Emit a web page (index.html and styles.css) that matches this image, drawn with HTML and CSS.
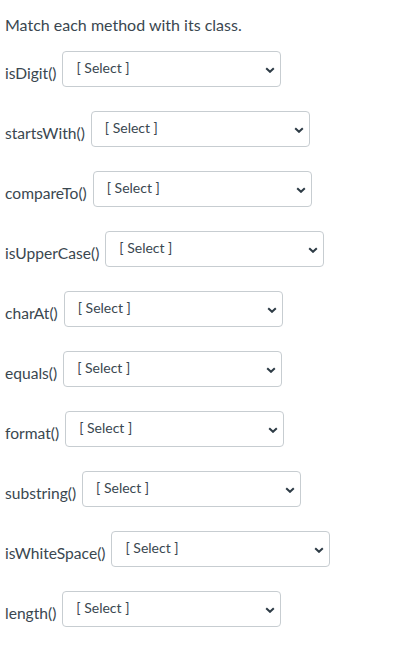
FILE: index.html
```html
<!DOCTYPE html>
<html>
<head>
<meta charset="utf-8">
<link rel="stylesheet" href="styles.css">
</head>
<body>
<div class="page">
  <p class="prompt">Match each method with its class.</p>
  <div class="rows">
    <div class="row"><span class="label">isDigit()</span><div class="select"><span class="value">[ Select ]</span><svg class="chev" viewBox="0 0 10 6"><path d="M1.2 1.2l3.8 3.6 3.8-3.6"/></svg></div></div>
    <div class="row"><span class="label">startsWith()</span><div class="select"><span class="value">[ Select ]</span><svg class="chev" viewBox="0 0 10 6"><path d="M1.2 1.2l3.8 3.6 3.8-3.6"/></svg></div></div>
    <div class="row"><span class="label">compareTo()</span><div class="select"><span class="value">[ Select ]</span><svg class="chev" viewBox="0 0 10 6"><path d="M1.2 1.2l3.8 3.6 3.8-3.6"/></svg></div></div>
    <div class="row"><span class="label">isUpperCase()</span><div class="select"><span class="value">[ Select ]</span><svg class="chev" viewBox="0 0 10 6"><path d="M1.2 1.2l3.8 3.6 3.8-3.6"/></svg></div></div>
    <div class="row"><span class="label">charAt()</span><div class="select"><span class="value">[ Select ]</span><svg class="chev" viewBox="0 0 10 6"><path d="M1.2 1.2l3.8 3.6 3.8-3.6"/></svg></div></div>
    <div class="row"><span class="label">equals()</span><div class="select"><span class="value">[ Select ]</span><svg class="chev" viewBox="0 0 10 6"><path d="M1.2 1.2l3.8 3.6 3.8-3.6"/></svg></div></div>
    <div class="row"><span class="label">format()</span><div class="select"><span class="value">[ Select ]</span><svg class="chev" viewBox="0 0 10 6"><path d="M1.2 1.2l3.8 3.6 3.8-3.6"/></svg></div></div>
    <div class="row"><span class="label">substring()</span><div class="select"><span class="value">[ Select ]</span><svg class="chev" viewBox="0 0 10 6"><path d="M1.2 1.2l3.8 3.6 3.8-3.6"/></svg></div></div>
    <div class="row"><span class="label">isWhiteSpace()</span><div class="select"><span class="value">[ Select ]</span><svg class="chev" viewBox="0 0 10 6"><path d="M1.2 1.2l3.8 3.6 3.8-3.6"/></svg></div></div>
    <div class="row"><span class="label">length()</span><div class="select"><span class="value">[ Select ]</span><svg class="chev" viewBox="0 0 10 6"><path d="M1.2 1.2l3.8 3.6 3.8-3.6"/></svg></div></div>
  </div>
</div>
</body>
</html>
```
FILE: styles.css
```css
html, body {
  margin: 0;
  padding: 0;
  background: #ffffff;
}
body {
  font-family: Lato, "Liberation Sans", sans-serif;
  color: #3a4750;
}
.page {
  padding: 14px 5px 0 5px;
}
.prompt {
  margin: 0;
  font-size: 16px;
  line-height: 22px;
}
.rows {
  display: flex;
  flex-direction: column;
  gap: 24px;
  margin-top: 15px;
}
.row {
  display: flex;
  align-items: flex-end;
  gap: 6px;
}
.label {
  font-size: 15.6px;
  line-height: 20px;
  padding-bottom: 4px;
}
.select {
  box-sizing: border-box;
  width: 219px;
  height: 36px;
  border: 1px solid #c7cdd1;
  border-radius: 4px;
  display: flex;
  align-items: center;
  justify-content: space-between;
  padding: 0 5px 0 13px;
}
.value {
  font-size: 14px;
  line-height: 18px;
  margin-top: -3px;
}
.chev {
  width: 10px;
  height: 6px;
  fill: none;
  stroke: #2d3b45;
  stroke-width: 2;
  margin-top: 2px;
}
```
